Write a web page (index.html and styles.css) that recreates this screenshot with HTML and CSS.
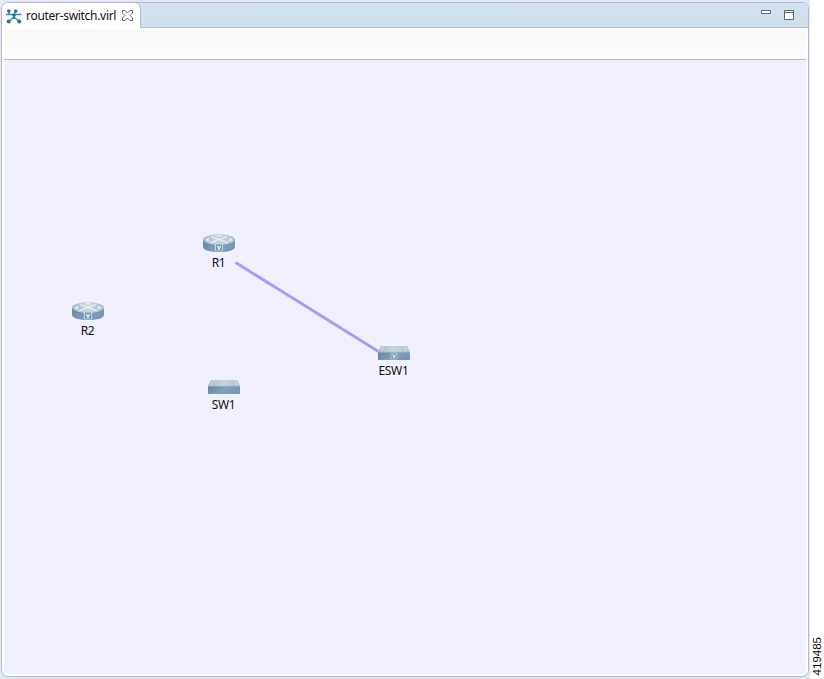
FILE: index.html
```html
<!DOCTYPE html>
<html lang="en">
<head>
    <meta charset="UTF-8">
    <title>router-switch.virl</title>
    <link rel="stylesheet" href="styles.css">
</head>
<body>
    <svg class="defs" width="0" height="0">
        <defs>
            <linearGradient id="side" x1="0" x2="1" y1="0" y2="0.3">
                <stop offset="0" stop-color="#5f86a8"/>
                <stop offset="0.6" stop-color="#83a1bb"/>
                <stop offset="1" stop-color="#7497b5"/>
            </linearGradient>
            <linearGradient id="top" x1="0" x2="1" y1="0" y2="0">
                <stop offset="0" stop-color="#a9bccb"/>
                <stop offset="0.5" stop-color="#c8d5de"/>
                <stop offset="1" stop-color="#adc0ce"/>
            </linearGradient>
            <symbol id="router" viewBox="0 0 32 19">
                <path d="M0 5.500v7.500c0 3 7 5 16 5s16-2 16-5V5.500z" fill="url(#side)"/>
                <ellipse cx="16" cy="5.500" rx="16" ry="5.400" fill="url(#top)"/>
                <path d="M8 2.500l8 3L24 2.500M7 9l9-3.500L25 9M13 2.500l3-1.300l3 1.300M6 4.500L3.500 5.700L6 7M26 4.500l2.500 1.200L26 7" fill="none" stroke="#eef3f6" stroke-width="1.200"/>
            </symbol>
            <symbol id="switch" viewBox="0 0 32 14">
                <path d="M3 0h26l3 6H0z" fill="url(#top)"/>
                <path d="M0 6h32v8H0z" fill="url(#side)"/>
                <path d="M0 6.300h32" stroke="#9ab2c6" stroke-width="0.800"/>
                <path d="M4 2h1.500M3 4h1.500M26.500 2h1.500M27.500 4h1.500" stroke="#eef3f6" stroke-width="1"/>
            </symbol>
            <symbol id="virtual" viewBox="0 0 8 8">
                <path d="M0.500 0.500h7v7h-7z" fill="#7593ae" stroke="#d5e0e9" stroke-width="0.900"/>
                <path d="M2.300 2.200L4 5.800L5.700 2.200" fill="none" stroke="#fff" stroke-width="1.100"/>
            </symbol>
        </defs>
    </svg>

    <div class="window">
        <div class="editor">
            <div class="tabs">
                <div class="tab">
                    <svg class="tab-icon" width="16" height="16" viewBox="0 0 16 16">
                        <path d="M0 6.500h15.500M2.800 3v3.500M9.700 3L8 6.500v3M2.800 13.300L8 9.200l5.200 4.100" fill="none" stroke="#3a82b0" stroke-width="1.400"/>
                        <g fill="#1f75aa">
                            <circle cx="2.800" cy="3" r="1.800"/>
                            <circle cx="9.700" cy="3" r="1.800"/>
                            <circle cx="2.700" cy="13.500" r="2"/>
                            <circle cx="13.200" cy="13.500" r="2"/>
                            <path d="M5.500 6h5L8 10.500z"/>
                        </g>
                    </svg>
                    <span class="tab-title">router-switch.virl</span>
                    <svg class="tab-close" width="11" height="11" viewBox="0 0 11 11">
                        <path d="M0.500 0.500h2.500L5.500 3L8 0.500h2.500V3L8 5.500L10.500 8v2.500H8L5.500 8L3 10.500H0.500V8L3 5.500L0.500 3z" fill="#fff" stroke="#666" stroke-width="1"/>
                    </svg>
                </div>
                <div class="controls">
                    <svg width="10" height="4" viewBox="0 0 10 4"><path d="M0.500 0.500h9v3h-9z" fill="#fff" stroke="#666"/></svg>
                    <svg width="10" height="10" viewBox="0 0 10 10"><path d="M0.500 0.500h9v9h-9zM0.500 2.500h9" fill="#fff" stroke="#666"/></svg>
                </div>
            </div>
            <div class="toolbar"></div>
            <div class="canvas">
                <svg class="links" width="802" height="614">
                    <path d="M231.500 202.500L374.500 291.500" stroke="#a0a0f8" stroke-width="3"/>
                </svg>
                <div class="node r1">
                    <svg width="32" height="19"><use href="#router"/><use href="#virtual" x="12" y="9.500" width="8" height="8"/></svg>
                    <span>R1</span>
                </div>
                <div class="node r2">
                    <svg width="32" height="19"><use href="#router"/><use href="#virtual" x="12" y="9.500" width="8" height="8"/></svg>
                    <span>R2</span>
                </div>
                <div class="node esw1">
                    <svg width="32" height="14"><use href="#switch"/><use href="#virtual" x="12.500" y="6.500" width="7" height="7"/></svg>
                    <span>ESW1</span>
                </div>
                <div class="node sw1">
                    <svg width="32" height="14"><use href="#switch"/></svg>
                    <span>SW1</span>
                </div>
            </div>
        </div>
    </div>
    <div class="figure-id">419485</div>
</body>
</html>
```

FILE: styles.css
```css
* {
    margin: 0;
    padding: 0;
    box-sizing: border-box;
}

body {
    display: flex;
    height: 679px;
    overflow: hidden;
    background: #fff;
    font-family: 'Noto Sans', 'Open Sans', sans-serif;
    font-size: 12px;
    color: #111;
}

svg {
    display: block;
    flex: none;
}

.defs {
    position: absolute;
}

.window {
    width: 810px;
    height: 679px;
    padding: 2px 1px 2px 1px;
    background: #e3e8f5;
}

.editor {
    display: flex;
    flex-direction: column;
    height: 675px;
    border: 1px solid #b3bad2;
    border-radius: 7px;
    background: #fff;
    overflow: hidden;
}

/* Tab strip */
.tabs {
    display: flex;
    justify-content: space-between;
    height: 25px;
    background: linear-gradient(#d3e1ef, #cddeec);
    border-bottom: 1px solid #b3bad2;
}

.tab {
    display: flex;
    align-items: center;
    width: 139px;
    height: 25px;
    padding-left: 4px;
    background: #fff;
    border-right: 1px solid #b3bad2;
    border-top-right-radius: 6px;
}

.tab-title {
    width: 91px;
    margin-left: 4px;
    font-size: 12px;
    letter-spacing: -0.3px;
    white-space: nowrap;
}

.tab-close {
    margin-left: 5px;
}

.controls {
    display: flex;
    gap: 13px;
    padding: 7px 14px 0 0;
}

.toolbar {
    height: 32px;
    margin: 0 2px;
    border-top: 2px solid #fff;
    border-bottom: 1px solid #b9bccb;
    background: linear-gradient(#f7f7f7, #fdfdfd);
}

/* Topology */
.canvas {
    position: relative;
    width: 802px;
    height: 614px;
    margin-left: 2px;
    background: #f0f0fe;
}

.links {
    position: absolute;
    left: 0;
    top: 0;
}

.node {
    position: absolute;
    display: flex;
    flex-direction: column;
    align-items: center;
    width: 32px;
}

.node span {
    margin: 2px 1px 0 0;
    line-height: 17px;
    letter-spacing: -0.3px;
}

.r1 {
    left: 199px;
    top: 174px;
}

.r2 {
    left: 68px;
    top: 242px;
}

.r1 span,
.r2 span {
    margin-top: 1px;
}

.esw1 {
    left: 374px;
    top: 286px;
}

.sw1 {
    left: 204px;
    top: 320px;
}

.figure-id {
    align-self: flex-end;
    width: 14px;
    margin-bottom: 4px;
    font-family: 'Liberation Sans', sans-serif;
    font-size: 11.5px;
    line-height: 14px;
    color: #000;
    writing-mode: vertical-rl;
    transform: rotate(180deg);
}
```
